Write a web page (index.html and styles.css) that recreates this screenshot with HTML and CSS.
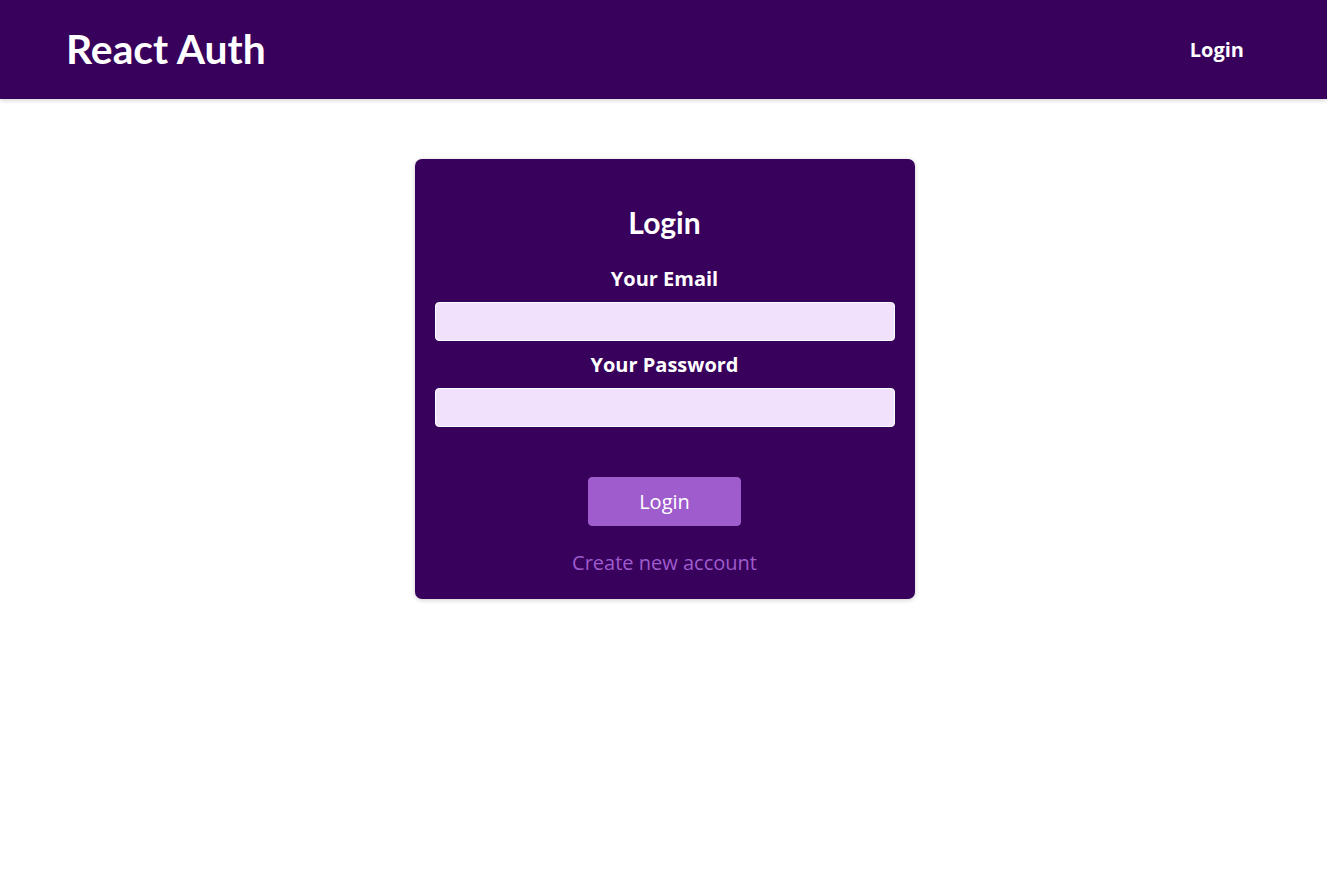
FILE: index.html
```html
<!DOCTYPE html>
<html lang="en">
<head>
<meta charset="utf-8">
<title>React Auth</title>
<link rel="stylesheet" href="styles.css">
</head>
<body>
<header class="header">
  <div class="logo">React Auth</div>
  <nav>
    <ul class="nav-list">
      <li><a class="nav-link" href="#">Login</a></li>
    </ul>
  </nav>
</header>
<main class="main">
  <section class="auth">
    <h1 class="auth-title">Login</h1>
    <form class="auth-form">
      <div class="control">
        <label class="control-label" for="email">Your Email</label>
        <input class="control-input" type="email" id="email">
      </div>
      <div class="control">
        <label class="control-label" for="password">Your Password</label>
        <input class="control-input" type="password" id="password">
      </div>
      <div class="actions">
        <button class="btn-primary" type="button">Login</button>
        <button class="btn-toggle" type="button">Create new account</button>
      </div>
    </form>
  </section>
</main>
</body>
</html>
```
FILE: styles.css
```css
* {
  box-sizing: border-box;
}

html {
  font-family: "Open Sans", "Liberation Sans", sans-serif;
  font-size: 20px;
}

body {
  margin: 0;
  background: #ffffff;
}

.header {
  width: 100%;
  height: 99px;
  background-color: #38015c;
  box-shadow: 0 1px 5px rgba(0, 0, 0, 0.2);
  display: flex;
  justify-content: space-between;
  align-items: center;
  padding: 0 83px 0 66px;
}

.logo {
  font-family: Lato, "Liberation Sans", sans-serif;
  font-size: 40.8px;
  font-weight: bold;
  color: #ffffff;
  margin: 0 0 2px 0;
}

.nav-list {
  list-style: none;
  margin: 0;
  padding: 0;
  display: flex;
}

.nav-link {
  text-decoration: none;
  color: #ffffff;
  font-weight: bold;
  font-size: 20px;
}

.main {
  padding-left: 2px;
}

.auth {
  margin: 60px auto;
  width: 500px;
  border-radius: 7px;
  background-color: #38015c;
  box-shadow: 0 1px 5px rgba(0, 0, 0, 0.2);
  padding: 20px 20px 23px;
  text-align: center;
}

.auth-title {
  font-family: Lato, "Liberation Sans", sans-serif;
  font-size: 30px;
  font-weight: bold;
  color: #ffffff;
  margin: 25px 0 25px;
  line-height: 36px;
}

.control {
  margin-bottom: 10px;
}

.control-label {
  display: block;
  color: #ffffff;
  font-weight: bold;
  font-size: 20px;
  line-height: 27px;
  margin-bottom: 10px;
}

.control-input {
  display: block;
  font: inherit;
  background-color: #f1e1fc;
  color: #38015c;
  border-radius: 4px;
  border: 1px solid #ffffff;
  width: 100%;
  height: 39px;
  padding: 5px;
}

.actions {
  margin-top: 50px;
  display: flex;
  flex-direction: column;
  align-items: center;
}

.btn-primary {
  font: inherit;
  font-size: 20px;
  color: #ffffff;
  background-color: #9f5ccc;
  border: 1px solid #9f5ccc;
  border-radius: 4px;
  padding: 0 50px;
  height: 49px;
  line-height: 27px;
}

.btn-toggle {
  font: inherit;
  font-size: 20px;
  margin-top: 23px;
  background-color: transparent;
  color: #9f5ccc;
  border: none;
  padding: 0 30px;
  line-height: 27px;
}
```
